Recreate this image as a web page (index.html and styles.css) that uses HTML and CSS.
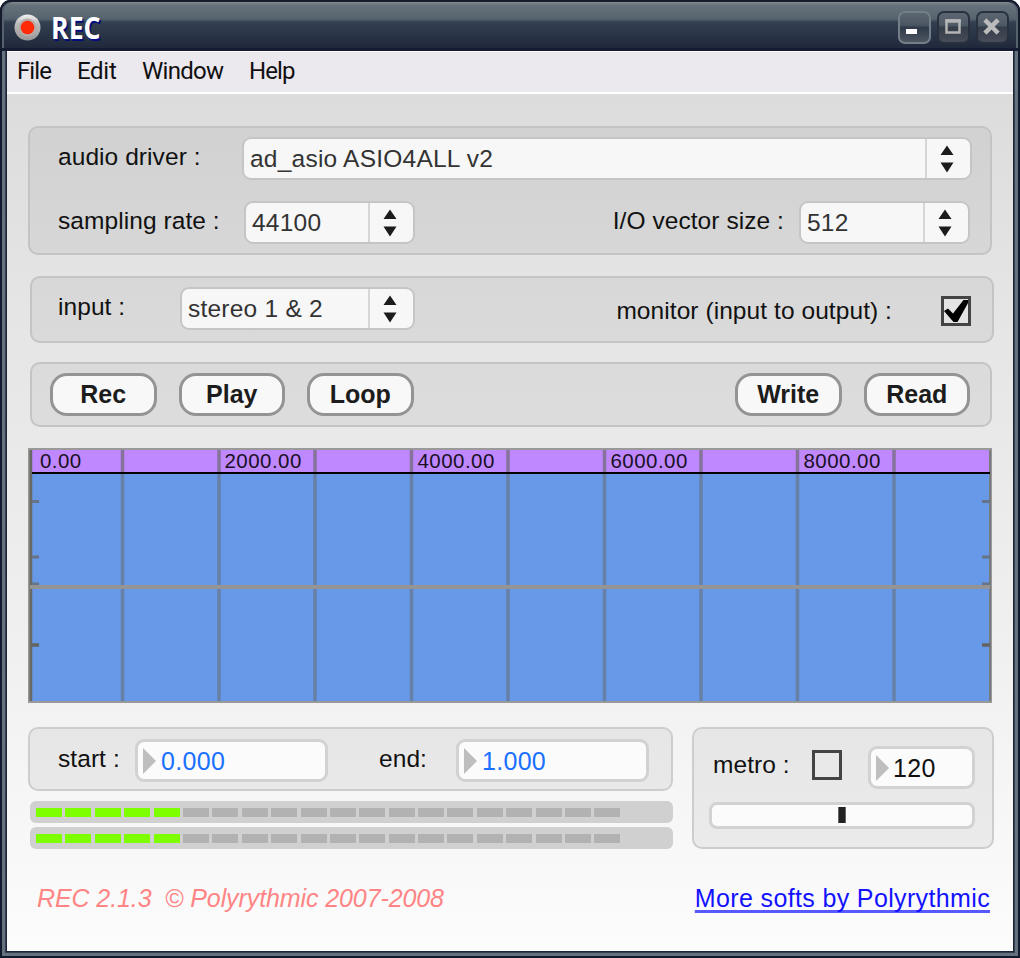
FILE: index.html
```html
<!DOCTYPE html>
<html lang="en">
<head>
<meta charset="utf-8">
<title>REC</title>
<link rel="stylesheet" href="styles.css">
</head>
<body>
<svg class="defs" width="0" height="0">
  <symbol id="updown" viewBox="0 0 14 28"><path d="M7 0.500 13.500 10H.5zM7 27.500 13.500 17.500H.5z" fill="#1c1c1c"/></symbol>
  <symbol id="tri" viewBox="0 0 13 26"><path d="M0 0 13 13 0 26z" fill="#bebebe"/></symbol>
</svg>
<div class="window">
  <header class="titlebar">
    <svg class="app-icon" width="27" height="27" viewBox="0 0 27 27">
      <defs><linearGradient id="ring" x2="0" y2="1"><stop stop-color="#f2f2f2"/><stop offset=".35" stop-color="#bcbcbc"/><stop offset="1" stop-color="#989898"/></linearGradient></defs>
      <circle cx="13.500" cy="13.500" r="13" fill="url(#ring)"/>
      <circle cx="13.500" cy="13.500" r="9" fill="#b7a9a6"/>
      <circle cx="13.500" cy="13.500" r="6.800" fill="#ff2a08"/>
    </svg>
    <h1 class="title">REC</h1>
    <div class="controls">
      <button class="ctl active" aria-label="Minimize"><svg width="29" height="29"><path d="M6 16h11v5H6z" fill="#fff"/></svg></button>
      <button class="ctl" aria-label="Maximize"><svg width="29" height="29"><path d="M7.500 7.500h13v12h-13z" fill="none" stroke="#b4b4b4" stroke-width="2.500"/><path d="M6.250 6.250h15.500v3.500H6.250z" fill="#b4b4b4"/></svg></button>
      <button class="ctl" aria-label="Close"><svg width="29" height="29"><path d="M8.500 8.500 18.500 18.500M18.500 8.500 8.500 18.500" stroke="#bcbcbc" stroke-width="4.500" stroke-linecap="square" fill="none"/></svg></button>
    </div>
  </header>
  <nav class="menu"><span class="m-file">File</span><span class="m-edit">Edit</span><span class="m-window">Window</span><span class="m-help">Help</span></nav>
  <main class="content">
    <section class="panel driver">
      <div class="row">
        <label class="label up">audio driver :</label>
        <div class="select sel-driver"><span class="value">ad_asio ASIO4ALL v2</span><span class="arrows"><svg width="14" height="28"><use href="#updown"/></svg></span></div>
      </div>
      <div class="row row-rate">
        <label class="label up">sampling rate :</label>
        <div class="select sel-rate"><span class="value">44100</span><span class="arrows"><svg width="14" height="28"><use href="#updown"/></svg></span></div>
        <label class="label up right">I/O vector size :</label>
        <div class="select sel-vector"><span class="value">512</span><span class="arrows"><svg width="14" height="28"><use href="#updown"/></svg></span></div>
      </div>
    </section>
    <section class="panel input">
      <label class="label up">input :</label>
      <div class="select sel-input"><span class="value">stereo 1 &amp; 2</span><span class="arrows"><svg width="14" height="28"><use href="#updown"/></svg></span></div>
      <label class="label monitor">monitor (input to output) :</label>
      <span class="check"><svg width="24" height="24" viewBox="0 0 24 24"><path d="M0 12 4 9.500 9 14.500 19.500 1H24V4L13.500 23H9.500z" fill="#000"/></svg></span>
    </section>
    <section class="panel transport">
      <button class="btn">Rec</button><button class="btn">Play</button><button class="btn">Loop</button>
      <button class="btn write">Write</button><button class="btn">Read</button>
    </section>
    <section class="wave">
      <svg class="grid" width="964" height="255" viewBox="28 448 964 255">
        <path d="M28 448h964v255H28z" fill="#999"/>
        <path d="M32 450h957v22H32z" fill="#bf88ff"/>
        <path d="M32 474h957v227H32z" fill="#6898e8"/>
        <path d="M29.500 450v251" stroke="#85857e" stroke-width="1"/>
        <path d="M31 450v251" stroke="#696a67" stroke-width="2.500"/>
        <path d="M990 450v251" stroke="#777b80" stroke-width="2"/>
        <path d="M122.500 450v22M219 450v22M315 450v22M411.500 450v22M508 450v22M604.500 450v22M701 450v22M797.500 450v22M894 450v22" stroke="#86739b" stroke-width="3.500"/>
        <path d="M122.500 474v227M219 474v227M315 474v227M411.500 474v227M508 474v227M604.500 474v227M701 474v227M797.500 474v227M894 474v227" stroke="#6680a8" stroke-width="3.500"/>
        <path d="M32 473h958" stroke="#000" stroke-width="2.200"/>
        <path d="M32 501.500h7M32 557h7M32 584h7M982 501.500h8M982 557h8M982 584h8" stroke="#677488" stroke-width="3"/>
        <path d="M32 645h7M982 645h8" stroke="#62645f" stroke-width="3.500"/>
        <path d="M30 587h960" stroke="#949494" stroke-width="4"/>
      </svg>
      <div class="ruler"><span>0.00</span><span>2000.00</span><span>4000.00</span><span>6000.00</span><span>8000.00</span></div>
    </section>
    <div class="lower">
      <div class="left">
        <section class="panel range">
          <label class="label">start :</label>
          <div class="num n-start"><svg width="13" height="26"><use href="#tri"/></svg><span>0.000</span></div>
          <label class="label end">end:</label>
          <div class="num n-end"><svg width="13" height="26"><use href="#tri"/></svg><span>1.000</span></div>
        </section>
        <div class="meter"><i class="on"></i><i class="on"></i><i class="on"></i><i class="on"></i><i class="on"></i><i></i><i></i><i></i><i></i><i></i><i></i><i></i><i></i><i></i><i></i><i></i><i></i><i></i><i></i><i></i></div>
        <div class="meter"><i class="on"></i><i class="on"></i><i class="on"></i><i class="on"></i><i class="on"></i><i></i><i></i><i></i><i></i><i></i><i></i><i></i><i></i><i></i><i></i><i></i><i></i><i></i><i></i><i></i></div>
      </div>
      <section class="panel metro">
        <div class="metro-row">
          <label class="label">metro :</label>
          <span class="check empty"></span>
          <div class="num tempo"><svg width="13" height="26"><use href="#tri"/></svg><span>120</span></div>
        </div>
        <div class="slider"><span class="thumb"></span></div>
      </section>
    </div>
    <footer class="footer"><span class="version">REC 2.1.3&nbsp; © Polyrythmic 2007-2008</span><a class="link">More softs by Polyrythmic</a></footer>
  </main>
</div>
</body>
</html>
```
FILE: styles.css
```css
* { box-sizing: border-box; }
body { margin: 0; background: #fff; font-family: "Liberation Sans", Arial, sans-serif; overflow: hidden; }
svg { display: block; }
.defs { position: absolute; }
button { padding: 0; font-family: inherit; }

.window {
  width: 1020px; height: 958px; padding: 0 7px 7px 7px;
  display: flex; flex-direction: column;
  border-radius: 11px 11px 0 0; overflow: hidden;
  background: #1b2438;
  box-shadow: inset 0 0 0 2px #111a2e, inset 0 0 0 5px #65717d, inset 0 0 0 6px #343f50;
}
.titlebar {
  height: 51px; flex: none; display: flex; align-items: flex-start;
  margin: 0 -7px; padding: 0 9px 0 12px;
  border: 2px solid #141c2e; border-bottom: 3px solid #151c31;
  border-radius: 11px 11px 0 0;
  background: linear-gradient(#8c8c8c 0, #6e787f 2px, #65717a 4px, #56636e 17px, #334050 20px, #303c4e 24px, #20293b 46px);
  box-shadow: inset 2px 0 #56616e, inset -2px 0 #56616e;
}
.app-icon { margin-top: 12px; }
.title {
  margin: 5px 0 0 10px; width: 60px; font: bold 30px/41px "Open Sans", "Noto Sans", sans-serif;
  color: #fff; text-shadow: 1.5px 1.5px 0 #000c80; transform: scaleX(.89); transform-origin: left;
}
.controls { display: flex; gap: 6px; margin: 9px 0 0 auto; }
.ctl {
  width: 33px; height: 33px; border: 2px solid #29313f; border-radius: 7px;
  background: linear-gradient(#5c6671, #4f5a67 42%, #343d49 50%, #474d58); overflow: hidden;
}
.ctl.active { border-color: #747e88; background: linear-gradient(#5c6671, #4b5663 42%, #303a49 50%, #4d5661); }

.menu {
  height: 43px; flex: none; display: flex; background: #ebe8ee; border-bottom: 2px solid #fff;
  border-top: 1px solid #fff; font: 24px/38px Roboto, sans-serif; color: #101010; padding-left: 10px; white-space: nowrap;
}
.m-file { width: 60px; letter-spacing: -.9px; }
.m-edit { width: 65px; letter-spacing: -.3px; }
.m-window { width: 107px; letter-spacing: -.7px; }
.m-help { letter-spacing: -.9px; }

.content { flex: 1; background: linear-gradient(#dcdcdc, #e4e4e4 22%, #f0f0f0 65%, #fcfcfc); padding: 32px 18px 0 21px; }
.panel { border: 2px solid #c4c4c4; border-radius: 10px; background: rgba(0,0,0,.05); display: flex; }
.label { font-size: 24.500px; letter-spacing: .07px; line-height: 43px; color: #111; white-space: nowrap; }
.up { line-height: 39px; }

.select {
  display: flex; height: 43px; border: 2px solid #c5c5c5; border-radius: 9px; background: #f7f7f7;
  font-size: 24.500px; line-height: 40px; color: #333; white-space: nowrap;
}
.value { flex: 1; padding-left: 6px; letter-spacing: .23px; }
.arrows { width: 45px; border-left: 2px solid #d6d6d6; padding-right: 4px; display: flex; justify-content: center; align-items: center; }

.driver { width: 964px; height: 129px; flex-direction: column; padding: 9px 18px 0 28px; }
.row { display: flex; }
.row-rate { margin-top: 21px; padding-right: 2px; }
.sel-driver { width: 730px; margin-left: auto; }
.row-rate .label:first-child { width: 186px; }
.sel-rate, .sel-vector { width: 171px; }
.right { margin-left: auto; margin-right: 15px; }

.input { width: 964px; height: 67px; margin: 21px 0 0 2px; padding: 9px 21px 0 26px; }
.input > .label:first-child { width: 122px; }
.sel-input { width: 235px; }
.monitor { margin-left: auto; margin-right: 49px; line-height: 48px; }
.check { width: 30px; height: 30px; border: 3px solid #444; margin-top: 9px; background: #e4e4e4; }

.transport { width: 962px; height: 65px; margin: 19px 0 0 2px; padding: 9px 20px 0 18px; gap: 22px; }
.btn {
  width: 106.500px; height: 43px; border: 3px solid #949494; border-radius: 17px; background: #f8f8f8;
  font: bold 25px/36px "Liberation Sans", sans-serif; color: #1c1c1c; padding-bottom: 2px;
}
.write { margin-left: auto; }

.wave { display: grid; width: 964px; height: 255px; margin-top: 21px; }
.grid, .ruler { grid-area: 1 / 1; }
.ruler { display: grid; grid-template-columns: 184.500px 193px 193px 193px 1fr; padding-left: 12px; font-size: 20.500px; line-height: 25px; letter-spacing: .45px; color: #1a1024; }

.lower { display: flex; justify-content: space-between; margin: 24px 1px 0 0; }
.range { width: 645px; height: 64px; padding: 10px 22px 0 28px; }
.range .label { line-height: 40px; }
.range, .metro { border-color: #cdcdcd; }
.num {
  display: flex; align-items: center; height: 43px; border: 3px solid #d2d2d2; border-radius: 9px;
  background: #fbfbfb; padding-left: 5px; font-size: 25px; color: #1a70ff; letter-spacing: .3px;
}
.num span { margin-left: 5px; padding-top: 1px; }
.n-start { width: 193px; margin-left: auto; }
.n-end { width: 193px; margin-left: 29px; }
.end { margin-left: 51px; }
.meter { width: 643px; height: 22px; margin: 10px 0 0 2px; border-radius: 6px; background: #d0d0d0; display: flex; gap: 3.400px; padding: 7px 0 0 6px; }
.meter + .meter { margin-top: 4px; }
.meter i { width: 26px; height: 9px; background: #b2b2b2; }
.meter .on { background: #7dff00; }

.metro { width: 302px; height: 122px; padding: 17px 17px 0 15px; flex-direction: column; }
.metro-row { display: flex; }
.metro .label { padding-left: 4px; line-height: 38px; }
.empty { margin: 4px 26px 0 auto; background: #e9e9e9; }
.tempo { width: 107px; color: #111; }
.tempo span { margin-left: 4px; }
.slider { height: 27px; margin-top: 13px; border: 3px solid #d2d2d2; border-radius: 8px; background: #fbfbfb; padding: 2px 0 0 126px; }
.thumb { display: block; width: 8px; height: 16px; background: #222; border: solid #666; border-width: 0 1px; }

.footer { display: flex; justify-content: space-between; margin-top: 29px; padding: 0 5px 0 9px; font-size: 25px; line-height: 40px; white-space: nowrap; }
.version { font-style: italic; color: #ff8585; letter-spacing: -.1px; }
.link { color: #1212ff; letter-spacing: .36px; text-decoration: underline; text-decoration-color: #5858ff; text-decoration-thickness: 2.500px; text-underline-offset: 3px; text-decoration-skip-ink: none; }
```
